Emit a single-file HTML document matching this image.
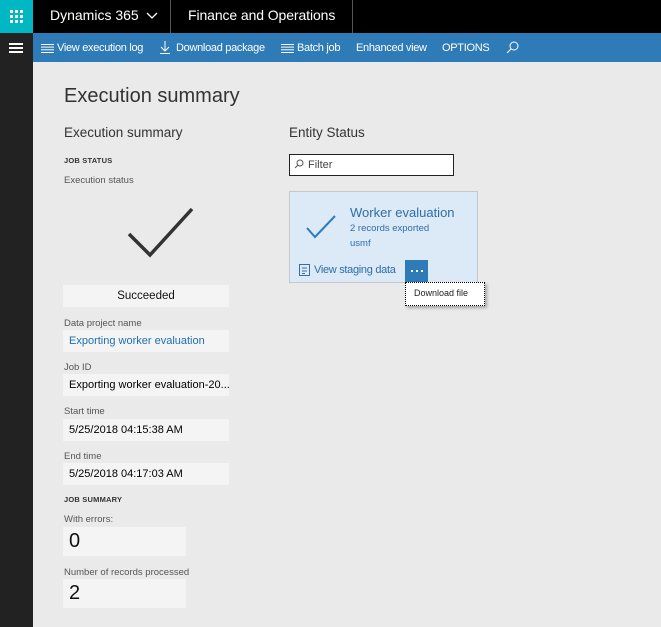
<html><head><style>
body{margin:0;width:661px;height:627px;background:#eaeaea;font-family:"Liberation Sans",sans-serif;position:relative;overflow:hidden}
div,span{position:absolute;box-sizing:border-box}
.t{white-space:nowrap}
.lbl{font-size:9.5px;color:#555}
.box{background:#f4f4f4;left:63px;width:166px;height:22px;font-size:11px;padding:5px 6px;white-space:nowrap;overflow:hidden}
.h{font-size:7.5px;font-weight:bold;color:#333;letter-spacing:.2px}
.ab{top:42px;font-size:11px;color:#fff;letter-spacing:-0.3px}
</style></head><body>
<div style="left:0;top:0;width:661px;height:33px;background:#000"></div>
<div style="left:0;top:0;width:33px;height:33px;background:#00b7c3"></div>
<svg style="position:absolute;left:10px;top:10px" width="13" height="13"><g fill="#fff"><rect x="0" y="0" width="3" height="3"/><rect x="5" y="0" width="3" height="3"/><rect x="10" y="0" width="3" height="3"/><rect x="0" y="5" width="3" height="3"/><rect x="5" y="5" width="3" height="3"/><rect x="10" y="5" width="3" height="3"/><rect x="0" y="10" width="3" height="3"/><rect x="5" y="10" width="3" height="3"/><rect x="10" y="10" width="3" height="3"/></g></svg>
<div class="t" style="left:50px;top:7px;color:#fff;font-size:14px">Dynamics 365</div>
<svg style="position:absolute;left:146px;top:12px" width="12" height="8"><path d="M1 1l5 5 5-5" stroke="#fff" fill="none" stroke-width="1.3"/></svg>
<div style="left:170px;top:0;width:1px;height:33px;background:#555"></div>
<div class="t" style="left:188px;top:7px;color:#fff;font-size:14px;letter-spacing:-0.1px">Finance and Operations</div>
<div style="left:352px;top:0;width:1px;height:33px;background:#555"></div>
<div style="left:0;top:33px;width:33px;height:594px;background:#222"></div>
<div style="left:9px;top:43px;width:14px;height:2px;background:#fff"></div>
<div style="left:9px;top:47px;width:14px;height:2px;background:#fff"></div>
<div style="left:9px;top:51px;width:14px;height:2px;background:#fff"></div>
<div style="left:33px;top:33px;width:628px;height:29px;background:#2e7bb7"></div>
<svg style="position:absolute;left:41px;top:44px" width="13" height="9"><g fill="#fff"><rect y="0" width="13" height="1"/><rect y="2.6" width="13" height="1"/><rect y="5.3" width="13" height="1"/><rect y="8" width="13" height="1"/></g></svg>
<div class="ab t" style="left:57px">View execution log</div>
<svg style="position:absolute;left:160px;top:41px" width="10" height="13"><path d="M5 0v10M1 6l4 4 4-4M0 12.5h10" stroke="#fff" fill="none"/></svg>
<div class="ab t" style="left:176px">Download package</div>
<svg style="position:absolute;left:281px;top:44px" width="13" height="9"><g fill="#fff"><rect y="0" width="13" height="1"/><rect y="2.6" width="13" height="1"/><rect y="5.3" width="13" height="1"/><rect y="8" width="13" height="1"/></g></svg>
<div class="ab t" style="left:297px">Batch job</div>
<div class="ab t" style="left:356px">Enhanced view</div>
<div class="ab t" style="left:442px">OPTIONS</div>
<svg style="position:absolute;left:506px;top:41px" width="13" height="13"><circle cx="8" cy="5" r="4" stroke="#fff" fill="none"/><path d="M5 8l-4 4" stroke="#fff"/></svg>
<div class="t" style="left:64px;top:85px;font-size:20px;color:#333">Execution summary</div>
<div class="t" style="left:64px;top:125px;font-size:13.5px;color:#333">Execution summary</div>
<div class="t h" style="left:64px;top:156px">JOB STATUS</div>
<div class="t lbl" style="left:64px;top:175px">Execution status</div>
<svg style="position:absolute;left:125px;top:205px" width="72" height="55"><path d="M4 29l21 21 42-46" stroke="#333" stroke-width="3.5" fill="none"/></svg>
<div class="box" style="top:285px;text-align:center;font-size:11.5px;color:#111">Succeeded</div>
<div class="t lbl" style="left:64px;top:318px">Data project name</div>
<div class="box" style="top:330px;color:#1d6fb0">Exporting worker evaluation</div>
<div class="t lbl" style="left:64px;top:362px">Job ID</div>
<div class="box" style="top:374px">Exporting worker evaluation-20...</div>
<div class="t lbl" style="left:64px;top:406px">Start time</div>
<div class="box" style="top:419px">5/25/2018 04:15:38 AM</div>
<div class="t lbl" style="left:64px;top:451px">End time</div>
<div class="box" style="top:463px">5/25/2018 04:17:03 AM</div>
<div class="t h" style="left:64px;top:495px">JOB SUMMARY</div>
<div class="t lbl" style="left:64px;top:514px">With errors:</div>
<div class="box" style="top:527px;width:123px;height:29px;font-size:20px;padding:3px 6px;color:#111">0</div>
<div class="t lbl" style="left:64px;top:567px">Number of records processed</div>
<div class="box" style="top:579px;width:123px;height:29px;font-size:20px;padding:3px 6px;color:#111">2</div>
<div class="t" style="left:289px;top:125px;font-size:13.5px;color:#333">Entity Status</div>
<div style="left:289px;top:154px;width:165px;height:22px;border:1px solid #222;background:#fff"></div>
<svg style="position:absolute;left:294px;top:159px" width="10" height="10"><circle cx="6" cy="4" r="3" stroke="#555" fill="none"/><path d="M4 6l-3 3" stroke="#555"/></svg>
<div class="t" style="left:308px;top:159px;font-size:11px;color:#444">Filter</div>
<div style="left:289px;top:191px;width:189px;height:92px;background:#dce9f6;border:1px solid #c4c8cc"></div>
<svg style="position:absolute;left:305px;top:213px" width="32" height="26"><path d="M2 15l8 9 20-21" stroke="#2e7bb7" stroke-width="2" fill="none"/></svg>
<div class="t" style="left:350px;top:205px;font-size:13px;color:#2e6ea7">Worker evaluation</div>
<div class="t" style="left:350px;top:223px;font-size:9.5px;color:#2e6ea7">2 records exported</div>
<div class="t" style="left:350px;top:238px;font-size:9.5px;color:#2e6ea7">usmf</div>
<svg style="position:absolute;left:299px;top:264px" width="11" height="12"><rect x="0.5" y="0.5" width="10" height="11" stroke="#3a6ea0" fill="none"/><path d="M3 4h5M3 7h5M3 9.5h3" stroke="#3a6ea0"/></svg>
<div class="t" style="left:314px;top:264px;font-size:11px;color:#2e6ea7;letter-spacing:-0.3px">View staging data</div>
<div style="left:405px;top:260px;width:23px;height:22px;background:#2e7bb7"></div>
<div style="left:411px;top:270px;width:2px;height:2px;background:#fff"></div>
<div style="left:416px;top:270px;width:2px;height:2px;background:#fff"></div>
<div style="left:421px;top:270px;width:2px;height:2px;background:#fff"></div>
<div style="left:405px;top:282px;width:80px;height:24px;background:#fff;border:1px dotted #000;box-shadow:2px 2px 3px rgba(0,0,0,.3)"></div>
<div class="t" style="left:414px;top:288px;font-size:9px;color:#222">Download file</div>
</body></html>
